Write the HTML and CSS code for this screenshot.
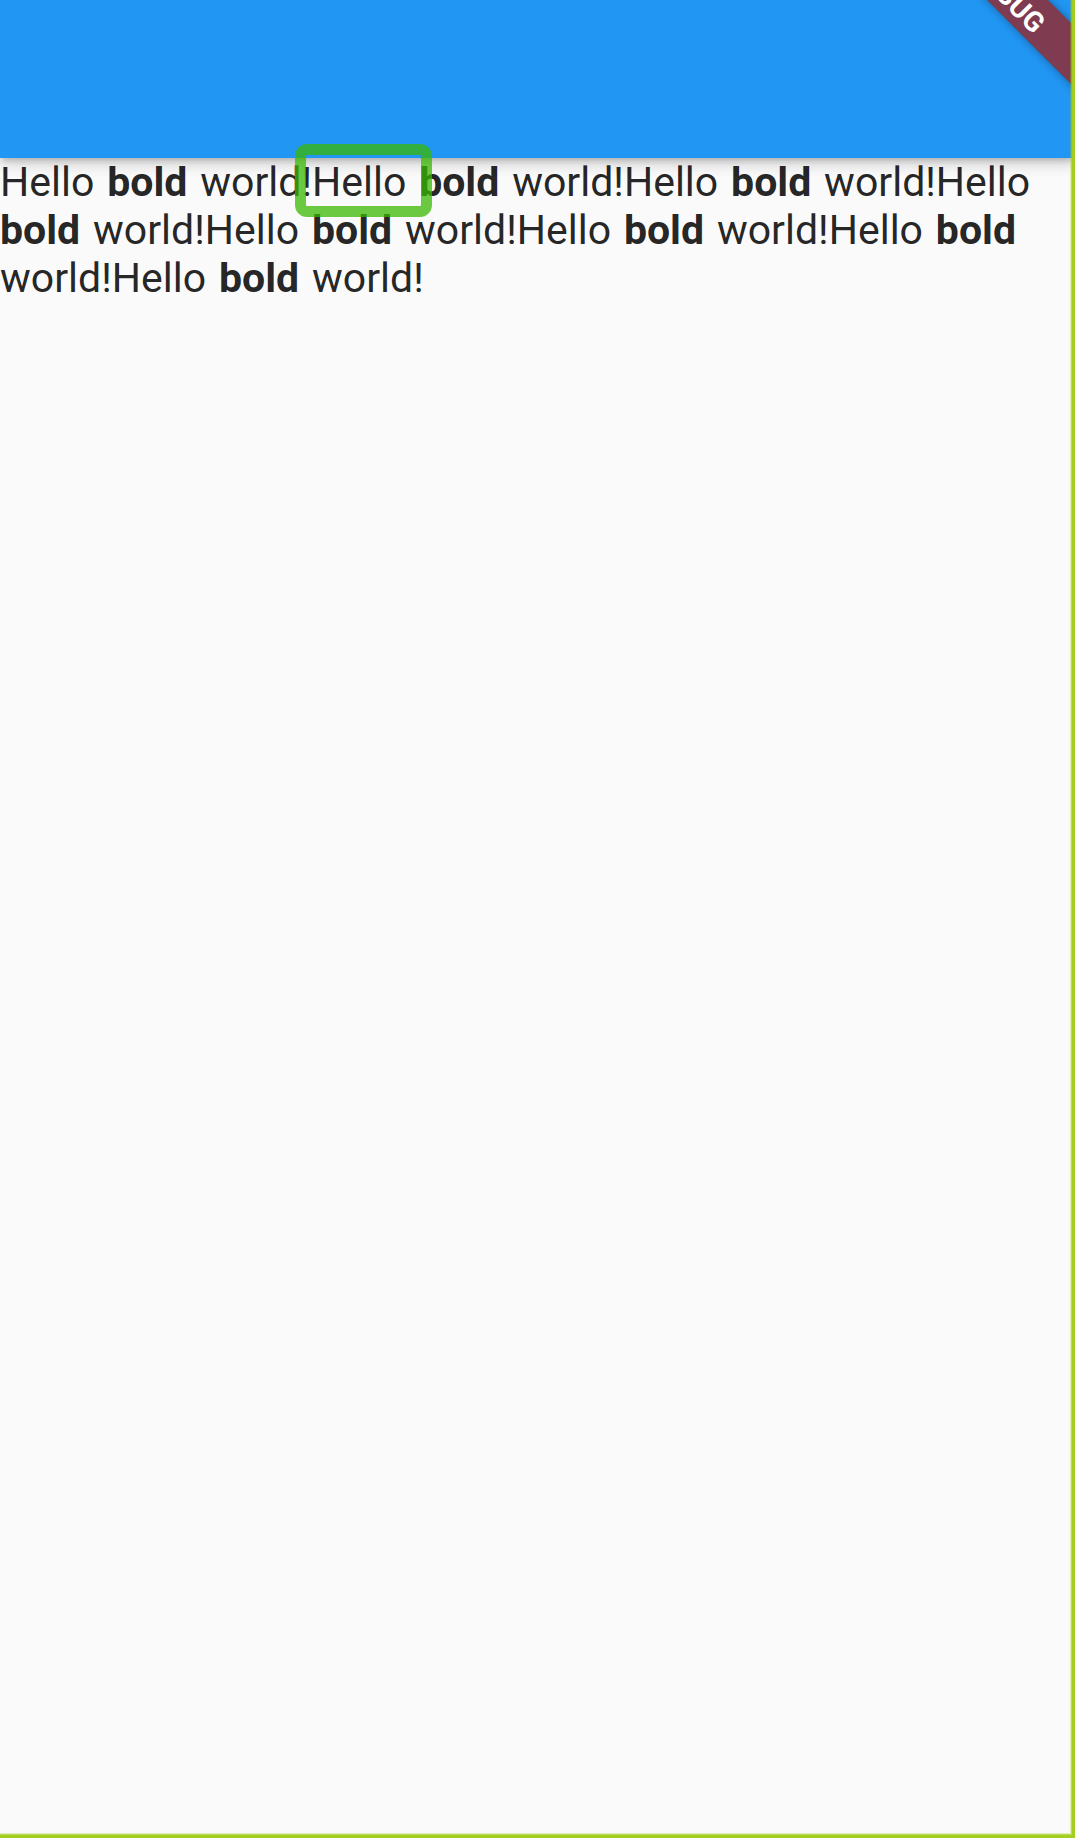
FILE: index.html
```html
<!DOCTYPE html>
<html lang="en">
<head>
<meta charset="utf-8">
<title>RichText demo</title>
<link rel="stylesheet" href="styles.css">
</head>
<body>
<div class="app">
  <header class="appbar"></header>
  <main class="content">
    <p class="para">Hello <b>bold</b> world!<span class="hl">Hello </span><b>bold</b> world!Hello <b>bold</b> world!Hello <b>bold</b> world!Hello <b>bold</b> world!Hello <b>bold</b> world!Hello <b>bold</b> world!Hello <b>bold</b> world!</p>
  </main>
  <div class="debug-banner"><span class="debug-text">DEBUG</span></div>
  <div class="frame"></div>
</div>
</body>
</html>
```
FILE: styles.css
```css
html, body {
  margin: 0;
  padding: 0;
  background: #fafafa;
}

.app {
  position: relative;
  width: 1075px;
  height: 1838px;
  overflow: hidden;
  background: #fafafa;
  font-family: Roboto, "Noto Sans", sans-serif;
}

.appbar {
  position: relative;
  z-index: 1;
  height: 157.5px;
  background: #2196f3;
  box-shadow: 0 4px 6px -2px rgba(0, 0, 0, 0.2),
              0 8px 12px 0 rgba(0, 0, 0, 0.1),
              0 2px 18px 0 rgba(0, 0, 0, 0.08);
}

.content {
  display: block;
}

.para {
  margin: 0;
  font-size: 41px;
  line-height: 48px;
  word-spacing: 2.7px;
  color: rgba(0, 0, 0, 0.87);
  font-weight: 400;
}

.para b {
  font-weight: 700;
}

.hl {
  position: relative;
}

.hl::after {
  content: "";
  position: absolute;
  top: -14px;
  bottom: -11px;
  left: -17px;
  right: -13px;
  border: 11px solid rgba(56, 183, 0, 0.74);
  border-radius: 12px;
  z-index: 2;
}

.debug-banner {
  position: absolute;
  z-index: 5;
  left: 858.5px;
  top: -30.4px;
  width: 300px;
  height: 43px;
  background: #7f3b4f;
  transform: rotate(45deg);
  box-shadow: 0 0 8px rgba(0, 0, 0, 0.35);
  text-align: center;
}

.debug-text {
  display: block;
  color: #ffffff;
  font-family: Roboto, "Noto Sans", sans-serif;
  font-weight: 700;
  font-size: 28px;
  line-height: 43px;
  transform: translate(3px, 4px);
}

.frame {
  position: absolute;
  z-index: 6;
  inset: 0;
  pointer-events: none;
  box-shadow: inset -3px -3px 0 rgba(160, 206, 30, 0.95),
              inset -4px -4px 0 rgba(160, 206, 30, 0.6),
              inset -5px -5px 0 rgba(160, 206, 30, 0.3);
}
```
